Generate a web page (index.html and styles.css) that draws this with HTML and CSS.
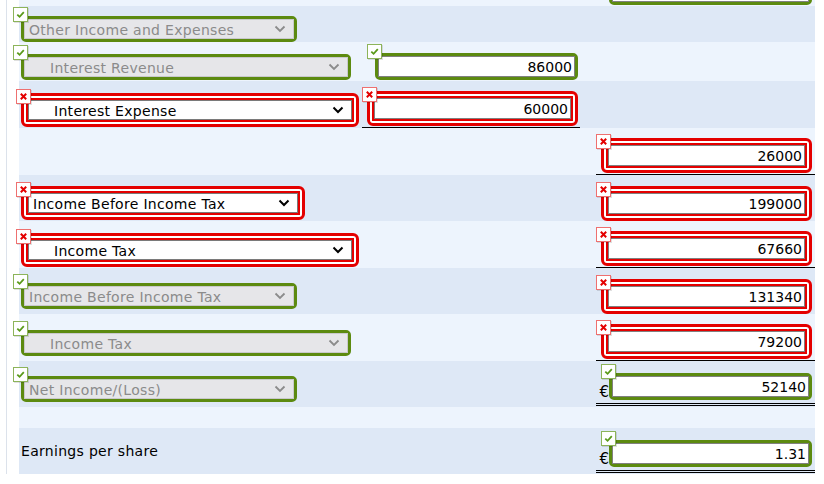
FILE: index.html
```html
<!DOCTYPE html>
<html>
<head>
<meta charset="utf-8">
<title>Income Statement</title>
<link rel="stylesheet" href="styles.css">
</head>
<body>
<div class="page">
  <div class="sheet">
    <div class="row light h40">
      <div class="cell cc">
        <div class="frame ok"><span class="badge ok"><svg viewBox="0 0 13 13" width="13" height="13"><path d="M3.3 6.6 L5.6 8.8 L9.8 4.2" fill="none" stroke="#5a9a1a" stroke-width="1.8"/></svg></span><div class="ctl inp"></div></div>
      </div>
    </div>

    <div class="row dark h36">
      <div class="cell ca">
        <div class="frame ok"><span class="badge ok"><svg viewBox="0 0 13 13" width="13" height="13"><path d="M3.3 6.6 L5.6 8.8 L9.8 4.2" fill="none" stroke="#5a9a1a" stroke-width="1.8"/></svg></span><div class="ctl sel short off"><span>Other Income and Expenses</span><svg class="chev" viewBox="0 0 12 8" width="12" height="8"><path d="M1.5 1.5 L6 6 L10.5 1.5" fill="none" stroke="currentColor" stroke-width="1.8"/></svg></div></div>
      </div>
    </div>

    <div class="row light h39">
      <div class="cell ca">
        <div class="frame ok"><span class="badge ok"><svg viewBox="0 0 13 13" width="13" height="13"><path d="M3.3 6.6 L5.6 8.8 L9.8 4.2" fill="none" stroke="#5a9a1a" stroke-width="1.8"/></svg></span><div class="ctl sel long off ind"><span>Interest Revenue</span><svg class="chev" viewBox="0 0 12 8" width="12" height="8"><path d="M1.5 1.5 L6 6 L10.5 1.5" fill="none" stroke="currentColor" stroke-width="1.8"/></svg></div></div>
      </div>
      <div class="cell cb">
        <div class="frame ok"><span class="badge ok"><svg viewBox="0 0 13 13" width="13" height="13"><path d="M3.3 6.6 L5.6 8.8 L9.8 4.2" fill="none" stroke="#5a9a1a" stroke-width="1.8"/></svg></span><div class="ctl inp">86000</div></div>
      </div>
    </div>

    <div class="row dark h47">
      <div class="cell ca">
        <div class="frame err"><span class="badge err"><svg viewBox="0 0 13 13" width="13" height="13"><path d="M3.8 3.8 L9.2 9.2 M9.2 3.8 L3.8 9.2" stroke="#e40000" stroke-width="2"/></svg></span><div class="ctl sel long ind"><span>Interest Expense</span><svg class="chev" viewBox="0 0 12 8" width="12" height="8"><path d="M1.5 1.5 L6 6 L10.5 1.5" fill="none" stroke="currentColor" stroke-width="2"/></svg></div></div>
      </div>
      <div class="cell cb ul">
        <div class="frame err"><span class="badge err"><svg viewBox="0 0 13 13" width="13" height="13"><path d="M3.8 3.8 L9.2 9.2 M9.2 3.8 L3.8 9.2" stroke="#e40000" stroke-width="2"/></svg></span><div class="ctl inp">60000</div></div>
      </div>
    </div>

    <div class="row light h47">
      <div class="cell cc ul">
        <div class="frame err"><span class="badge err"><svg viewBox="0 0 13 13" width="13" height="13"><path d="M3.8 3.8 L9.2 9.2 M9.2 3.8 L3.8 9.2" stroke="#e40000" stroke-width="2"/></svg></span><div class="ctl inp">26000</div></div>
      </div>
    </div>

    <div class="row dark h46">
      <div class="cell ca">
        <div class="frame err"><span class="badge err"><svg viewBox="0 0 13 13" width="13" height="13"><path d="M3.8 3.8 L9.2 9.2 M9.2 3.8 L3.8 9.2" stroke="#e40000" stroke-width="2"/></svg></span><div class="ctl sel short"><span>Income Before Income Tax</span><svg class="chev" viewBox="0 0 12 8" width="12" height="8"><path d="M1.5 1.5 L6 6 L10.5 1.5" fill="none" stroke="currentColor" stroke-width="2"/></svg></div></div>
      </div>
      <div class="cell cc">
        <div class="frame err"><span class="badge err"><svg viewBox="0 0 13 13" width="13" height="13"><path d="M3.8 3.8 L9.2 9.2 M9.2 3.8 L3.8 9.2" stroke="#e40000" stroke-width="2"/></svg></span><div class="ctl inp">199000</div></div>
      </div>
    </div>

    <div class="row light h47">
      <div class="cell ca">
        <div class="frame err"><span class="badge err"><svg viewBox="0 0 13 13" width="13" height="13"><path d="M3.8 3.8 L9.2 9.2 M9.2 3.8 L3.8 9.2" stroke="#e40000" stroke-width="2"/></svg></span><div class="ctl sel long ind"><span>Income Tax</span><svg class="chev" viewBox="0 0 12 8" width="12" height="8"><path d="M1.5 1.5 L6 6 L10.5 1.5" fill="none" stroke="currentColor" stroke-width="2"/></svg></div></div>
      </div>
      <div class="cell cc ul">
        <div class="frame err"><span class="badge err"><svg viewBox="0 0 13 13" width="13" height="13"><path d="M3.8 3.8 L9.2 9.2 M9.2 3.8 L3.8 9.2" stroke="#e40000" stroke-width="2"/></svg></span><div class="ctl inp">67660</div></div>
      </div>
    </div>

    <div class="row dark h46">
      <div class="cell ca">
        <div class="frame ok"><span class="badge ok"><svg viewBox="0 0 13 13" width="13" height="13"><path d="M3.3 6.6 L5.6 8.8 L9.8 4.2" fill="none" stroke="#5a9a1a" stroke-width="1.8"/></svg></span><div class="ctl sel short off"><span>Income Before Income Tax</span><svg class="chev" viewBox="0 0 12 8" width="12" height="8"><path d="M1.5 1.5 L6 6 L10.5 1.5" fill="none" stroke="currentColor" stroke-width="1.8"/></svg></div></div>
      </div>
      <div class="cell cc">
        <div class="frame err"><span class="badge err"><svg viewBox="0 0 13 13" width="13" height="13"><path d="M3.8 3.8 L9.2 9.2 M9.2 3.8 L3.8 9.2" stroke="#e40000" stroke-width="2"/></svg></span><div class="ctl inp">131340</div></div>
      </div>
    </div>

    <div class="row light h47">
      <div class="cell ca">
        <div class="frame ok"><span class="badge ok"><svg viewBox="0 0 13 13" width="13" height="13"><path d="M3.3 6.6 L5.6 8.8 L9.8 4.2" fill="none" stroke="#5a9a1a" stroke-width="1.8"/></svg></span><div class="ctl sel long off ind"><span>Income Tax</span><svg class="chev" viewBox="0 0 12 8" width="12" height="8"><path d="M1.5 1.5 L6 6 L10.5 1.5" fill="none" stroke="currentColor" stroke-width="1.8"/></svg></div></div>
      </div>
      <div class="cell cc ul">
        <div class="frame err"><span class="badge err"><svg viewBox="0 0 13 13" width="13" height="13"><path d="M3.8 3.8 L9.2 9.2 M9.2 3.8 L3.8 9.2" stroke="#e40000" stroke-width="2"/></svg></span><div class="ctl inp">79200</div></div>
      </div>
    </div>

    <div class="row dark h46">
      <div class="cell ca">
        <div class="frame ok"><span class="badge ok"><svg viewBox="0 0 13 13" width="13" height="13"><path d="M3.3 6.6 L5.6 8.8 L9.8 4.2" fill="none" stroke="#5a9a1a" stroke-width="1.8"/></svg></span><div class="ctl sel short off"><span>Net Income/(Loss)</span><svg class="chev" viewBox="0 0 12 8" width="12" height="8"><path d="M1.5 1.5 L6 6 L10.5 1.5" fill="none" stroke="currentColor" stroke-width="1.8"/></svg></div></div>
      </div>
      <div class="cell cc dul">
        <span class="eur">€</span>
        <div class="frame ok"><span class="badge ok"><svg viewBox="0 0 13 13" width="13" height="13"><path d="M3.3 6.6 L5.6 8.8 L9.8 4.2" fill="none" stroke="#5a9a1a" stroke-width="1.8"/></svg></span><div class="ctl inp">52140</div></div>
      </div>
    </div>

    <div class="row light h21"></div>

    <div class="row dark h46">
      <div class="ca label">Earnings per share</div>
      <div class="cell cc dul">
        <span class="eur">€</span>
        <div class="frame ok"><span class="badge ok"><svg viewBox="0 0 13 13" width="13" height="13"><path d="M3.3 6.6 L5.6 8.8 L9.8 4.2" fill="none" stroke="#5a9a1a" stroke-width="1.8"/></svg></span><div class="ctl inp">1.31</div></div>
      </div>
    </div>
  </div>
</div>
</body>
</html>
```

FILE: styles.css
```css
html, body {
  margin: 0;
  padding: 0;
  background: #ffffff;
}

body {
  font-family: "DejaVu Sans", Verdana, sans-serif;
  font-size: 14px;
  color: #000;
  overflow: hidden;
}

.page {
  margin-left: 6px;
  border-left: 1px solid #dce2eb;
  padding-left: 12px;
  min-height: 484px;
  box-sizing: border-box;
}

.sheet {
  width: 796px;
  margin-top: -34px;
}

.row {
  display: grid;
  grid-template-columns: 343px 218px 16px 219px;
  align-items: center;
}

.light { background: #edf4fd; }
.dark { background: #dee8f6; }

.h21 { height: 21px; }
.h36 { height: 36px; }
.h39 { height: 39px; }
.h40 { height: 40px; }
.h46 { height: 46px; }
.h47 { height: 47px; }

.cell {
  padding-top: 10px;
  display: flex;
  align-items: flex-end;
}

.ca {
  grid-column: 1;
  padding-left: 2px;
}

.cb {
  grid-column: 2;
  justify-content: flex-end;
  padding-right: 2px;
}

.cc {
  grid-column: 4;
  justify-content: flex-end;
  padding-right: 3px;
}

.ul {
  border-bottom: 1px solid #000;
  padding-bottom: 1px;
}

.dul {
  border-bottom: 3px double #000;
  padding-bottom: 3px;
}

.label {
  line-height: 18px;
  letter-spacing: 0.3px;
}

.eur {
  line-height: 16px;
  font-size: 15px;
}

/* validation frames */
.frame {
  position: relative;
  border-radius: 5px;
}

.frame.ok {
  border: 3px solid #5c8a10;
}

.frame.err {
  border: 3px solid #e40000;
  border-radius: 6px;
  padding: 4px;
  background: #fff;
}

.frame.err .ctl {
  box-shadow: 0 0 0 2px #e40000;
}

.badge {
  position: absolute;
  width: 15px;
  height: 15px;
  box-sizing: border-box;
  background: #fff;
  display: flex;
  align-items: center;
  justify-content: center;
  z-index: 2;
}

.badge svg { display: block; }

.badge.ok {
  left: -11px;
  top: -12px;
  border: 1px solid #8db45a;
  box-shadow: 1px 1px 0 rgba(0, 0, 0, 0.12);
}

.badge.err {
  left: -8px;
  top: -7px;
  border: 1px solid #ee7070;
  box-shadow: 1px 1px 0 rgba(0, 0, 0, 0.12);
}

/* controls */
.ctl {
  box-sizing: border-box;
  border: 1px solid #7a7a7a;
  background: #fff;
  white-space: nowrap;
}

.sel {
  height: 20px;
  line-height: 18px;
  display: flex;
  align-items: center;
  justify-content: space-between;
  padding: 0 7px 0 4px;
  color: #000;
  letter-spacing: 0.3px;
}

.sel span {
  margin-top: 2px;
}

.sel.short { width: 270px; }
.sel.long { width: 324px; }
.sel.ind { padding-left: 25px; }

.sel.off {
  background: #e6e6e9;
  border-color: #c9c9cc;
  color: #8b8b8b;
}

.chev {
  display: block;
  flex: none;
}

.inp {
  width: 197px;
  height: 21px;
  line-height: 19px;
  padding-top: 1px;
  text-align: right;
  padding-right: 2px;
  color: #000;
  border-color: #808080;
  overflow: hidden;
}
```
